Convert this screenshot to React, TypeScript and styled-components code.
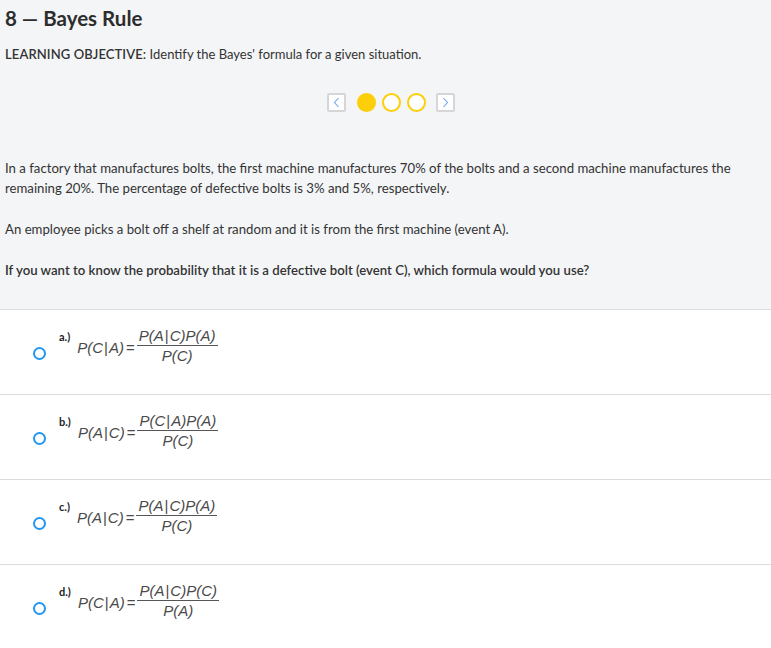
import React from "react";
import styled, { createGlobalStyle } from "styled-components";

const Global = createGlobalStyle`
  html, body { margin: 0; padding: 0; background: #ffffff; }
  body { font-family: Lato, "Liberation Sans", Arial, sans-serif; color: #333; }
`;

const Page = styled.div`
  width: 771px;
`;

const Top = styled.section`
  background: #f4f5f7;
  padding: 5px 5px 0 5px;
  height: 304px;
  border-bottom: 1px solid #dcdcdc;
`;

const Title = styled.h1`
  margin: 0;
  font-size: 20.5px;
  line-height: 26px;
  font-weight: 700;
  color: #2d2d2d;
`;

const Objective = styled.p`
  margin: 15px 0 0 0;
  font-size: 13px;
  line-height: 16px;
  color: #333;
`;

const Strong = styled.span`
  font-weight: 600;
  letter-spacing: 0.1px;
`;

const Nav = styled.div`
  display: flex;
  justify-content: center;
  align-items: center;
  gap: 6px;
  margin-top: 29px;
  padding-left: 10px;
  height: 22px;
`;

const NavBtn = styled.div<{ $side: "l" | "r" }>`
  width: 15px;
  height: 15px;
  border: 2px solid #d6d6d6;
  border-radius: 2px;
  background: #fff;
  display: flex;
  align-items: center;
  justify-content: center;
  margin: ${(p) => (p.$side === "l" ? "0 5px 0 0" : "0 0 0 4px")};
`;

const Dot = styled.div<{ $filled?: boolean }>`
  width: 15px;
  height: 15px;
  border-radius: 50%;
  border: 2px solid #fccf0a;
  background: ${(p) => (p.$filled ? "#fccf0a" : "#fff")};
`;

const Para = styled.p<{ $bold?: boolean }>`
  margin: 0;
  font-size: 13.2px;
  line-height: 20px;
  color: #333;
  font-weight: ${(p) => (p.$bold ? 600 : 400)};
`;

const Paras = styled.div`
  display: flex;
  flex-direction: column;
  gap: 21px;
  margin-top: 45px;
`;

const Option = styled.div`
  height: 85px;
  border-bottom: 1px solid #dcdcdc;
  display: flex;
  align-items: flex-start;
  padding-left: 33px;
  box-sizing: border-box;
`;

const Radio = styled.div`
  width: 9px;
  height: 9px;
  border: 2px solid #2196f3;
  border-radius: 50%;
  margin-top: 37px;
  flex: none;
`;

const Label = styled.span`
  font-size: 11px;
  font-weight: 700;
  color: #1e1e1e;
  margin: 21px 0 0 13px;
  line-height: 12px;
`;

const Formula = styled.div`
  display: flex;
  align-items: center;
  margin: 17px 0 0 7px;
  font-family: "Liberation Sans", Arial, sans-serif;
  font-style: italic;
  font-size: 15px;
  color: #4a4a4a;
`;

const Lhs = styled.span`
  margin-top: 3px;
`;

const Eq = styled.span`
  font-style: normal;
  margin: 0 1px 0 2px;
`;

const Fraction = styled.span`
  display: inline-flex;
  flex-direction: column;
  align-items: center;
  margin-left: 1px;
`;

const Num = styled.span`
  padding: 0 2px 1px 2px;
  line-height: 17px;
  border-bottom: 1px solid #555;
`;

const Den = styled.span`
  line-height: 17px;
  padding-top: 1px;
`;

const Bar = styled.span`
  font-style: normal;
  padding: 0 1px;
`;

const Chev = ({ dir }: { dir: "l" | "r" }) => (
  <svg width="9" height="11" viewBox="0 0 9 11">
    <path
      d={dir === "l" ? "M6.5 1 L2.5 5.5 L6.5 10" : "M2.5 1 L6.5 5.5 L2.5 10"}
      fill="none"
      stroke="#6aa7f0"
      strokeWidth="1.1"
    />
  </svg>
);

const P = ({ a, b }: { a: string; b: string }) => (
  <>
    P({a}
    <Bar>|</Bar>
    {b})
  </>
);

const options = [
  { k: "a.)", l: ["C", "A"], n: ["A", "C", "A"], d: "C" },
  { k: "b.)", l: ["A", "C"], n: ["C", "A", "A"], d: "C" },
  { k: "c.)", l: ["A", "C"], n: ["A", "C", "A"], d: "C" },
  { k: "d.)", l: ["C", "A"], n: ["A", "C", "C"], d: "A" },
];

export default function App() {
  return (
    <Page>
      <Global />
      <Top>
        <Title>8 — Bayes Rule</Title>
        <Objective>
          <Strong>LEARNING OBJECTIVE:</Strong> Identify the Bayes' formula for a given situation.
        </Objective>
        <Nav>
          <NavBtn $side="l">
            <Chev dir="l" />
          </NavBtn>
          <Dot $filled />
          <Dot />
          <Dot />
          <NavBtn $side="r">
            <Chev dir="r" />
          </NavBtn>
        </Nav>
        <Paras>
          <Para>
            In a factory that manufactures bolts, the first machine manufactures 70% of the bolts and a second machine manufactures the
            remaining 20%. The percentage of defective bolts is 3% and 5%, respectively.
          </Para>
          <Para>An employee picks a bolt off a shelf at random and it is from the first machine (event A).</Para>
          <Para $bold>
            If you want to know the probability that it is a defective bolt (event C), which formula would you use?
          </Para>
        </Paras>
      </Top>
      {options.map((o) => (
        <Option key={o.k}>
          <Radio />
          <Label>{o.k}</Label>
          <Formula>
            <Lhs>
              <P a={o.l[0]} b={o.l[1]} />
              <Eq>=</Eq>
            </Lhs>
            <Fraction>
              <Num>
                <P a={o.n[0]} b={o.n[1]} />P({o.n[2]})
              </Num>
              <Den>P({o.d})</Den>
            </Fraction>
          </Formula>
        </Option>
      ))}
    </Page>
  );
}
